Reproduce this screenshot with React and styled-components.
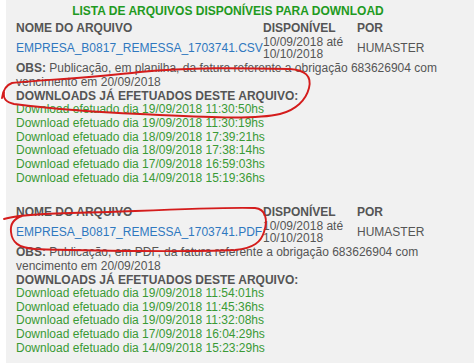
import styled, { createGlobalStyle } from 'styled-components';

const GlobalStyle = createGlobalStyle`
  * {
    margin: 0;
    padding: 0;
    box-sizing: border-box;
  }

  body {
    background: #ffffff;
    font-family: 'Liberation Sans', Arial, sans-serif;
    font-size: 12px;
    color: #555555;
  }
`;

const Page = styled.div`
  position: relative;
  width: 474px;
  height: 364px;
  overflow: hidden;
  padding-left: 6px;
`;

const Panel = styled.div`
  width: 480px;
  background: #f1f1f1;
  padding: 3px 0 7px 0;
`;

const Title = styled.h1`
  width: 444px;
  text-align: center;
  font-size: 12px;
  line-height: 17px;
  font-weight: bold;
  color: #1f9a22;
`;

const Block = styled.div`
  display: grid;
  grid-template-columns: 247px 94px 1fr;
  padding-left: 10px;
  margin-top: ${props => props.gap || 0}px;
`;

const HeadCell = styled.div`
  font-weight: bold;
  line-height: 16px;
  height: 16px;
  color: #555555;
`;

const Cell = styled.div`
  height: 24px;
  display: flex;
  flex-direction: column;
  justify-content: center;
  line-height: 12px;
  color: ${props => props.color || '#555555'};
`;

const Obs = styled.p`
  grid-column: 1 / -1;
  width: 440px;
  margin-top: 1px;
  line-height: 14px;

  & b {
    color: #555555;
  }
`;

const DownloadsTitle = styled.div`
  grid-column: 1 / -1;
  font-weight: bold;
  line-height: 14px;
`;

const DownloadLine = styled.div`
  grid-column: 1 / -1;
  line-height: 13.8px;
  color: #3a9a35;
`;

const Marks = styled.svg`
  position: absolute;
  left: 0;
  top: 0;
  pointer-events: none;
`;

const files = [
  {
    name: 'EMPRESA_B0817_REMESSA_1703741.CSV',
    kind: 'em planilha,',
    downloads: [
      '19/09/2018 11:30:50hs',
      '19/09/2018 11:30:19hs',
      '18/09/2018 17:39:21hs',
      '18/09/2018 17:38:14hs',
      '17/09/2018 16:59:03hs',
      '14/09/2018 15:19:36hs',
    ],
  },
  {
    name: 'EMPRESA_B0817_REMESSA_1703741.PDF',
    kind: 'em PDF,',
    downloads: [
      '19/09/2018 11:54:01hs',
      '19/09/2018 11:45:36hs',
      '19/09/2018 11:32:08hs',
      '17/09/2018 16:04:29hs',
      '14/09/2018 15:23:29hs',
    ],
  },
];

function FileBlock({ file, gap }) {
  return (
    <Block gap={gap}>
      <HeadCell>NOME DO ARQUIVO</HeadCell>
      <HeadCell>DISPONÍVEL</HeadCell>
      <HeadCell>POR</HeadCell>

      <Cell color="#2f78bf">{file.name}</Cell>
      <Cell>
        <span>10/09/2018 até</span>
        <span>10/10/2018</span>
      </Cell>
      <Cell>HUMASTER</Cell>

      <Obs>
        <b>OBS:</b> Publicação, {file.kind} da fatura referente a obrigação 683626904 com vencimento em 20/09/2018
      </Obs>
      <DownloadsTitle>DOWNLOADS JÁ EFETUADOS DESTE ARQUIVO:</DownloadsTitle>
      {file.downloads.map(d => (
        <DownloadLine key={d}>Download efetuado dia {d}</DownloadLine>
      ))}
    </Block>
  );
}

function App() {
  return (
    <>
      <GlobalStyle />
      <Page>
        <Panel>
          <Title>LISTA DE ARQUIVOS DISPONÍVEIS PARA DOWNLOAD</Title>
          <FileBlock file={files[0]} />
          <FileBlock file={files[1]} gap={18} />
        </Panel>
        <Marks width="474" height="364" viewBox="0 0 474 364">
          <g fill="none" stroke="#d41c1c" strokeWidth="1.9" strokeLinecap="round">
            <path d="M2 98 C3 90 6 85 12 83 C40 80 90 78 140 72 C190 67 240 68 290 69 C305 70 312 76 309 88 C306 100 296 110 280 114 C255 120 200 117 140 114 C90 112 45 108 14 104 C6 102 3 99 4 92" />
            <path d="M4 219 C20 214 60 213 110 212 C160 210 220 207 255 208 C266 209 268 220 264 232 C261 242 254 248 235 250 C190 252 90 251 35 249 C18 248 12 242 11 232 C10 224 13 219 22 216" />
          </g>
        </Marks>
      </Page>
    </>
  );
}

export default App;
